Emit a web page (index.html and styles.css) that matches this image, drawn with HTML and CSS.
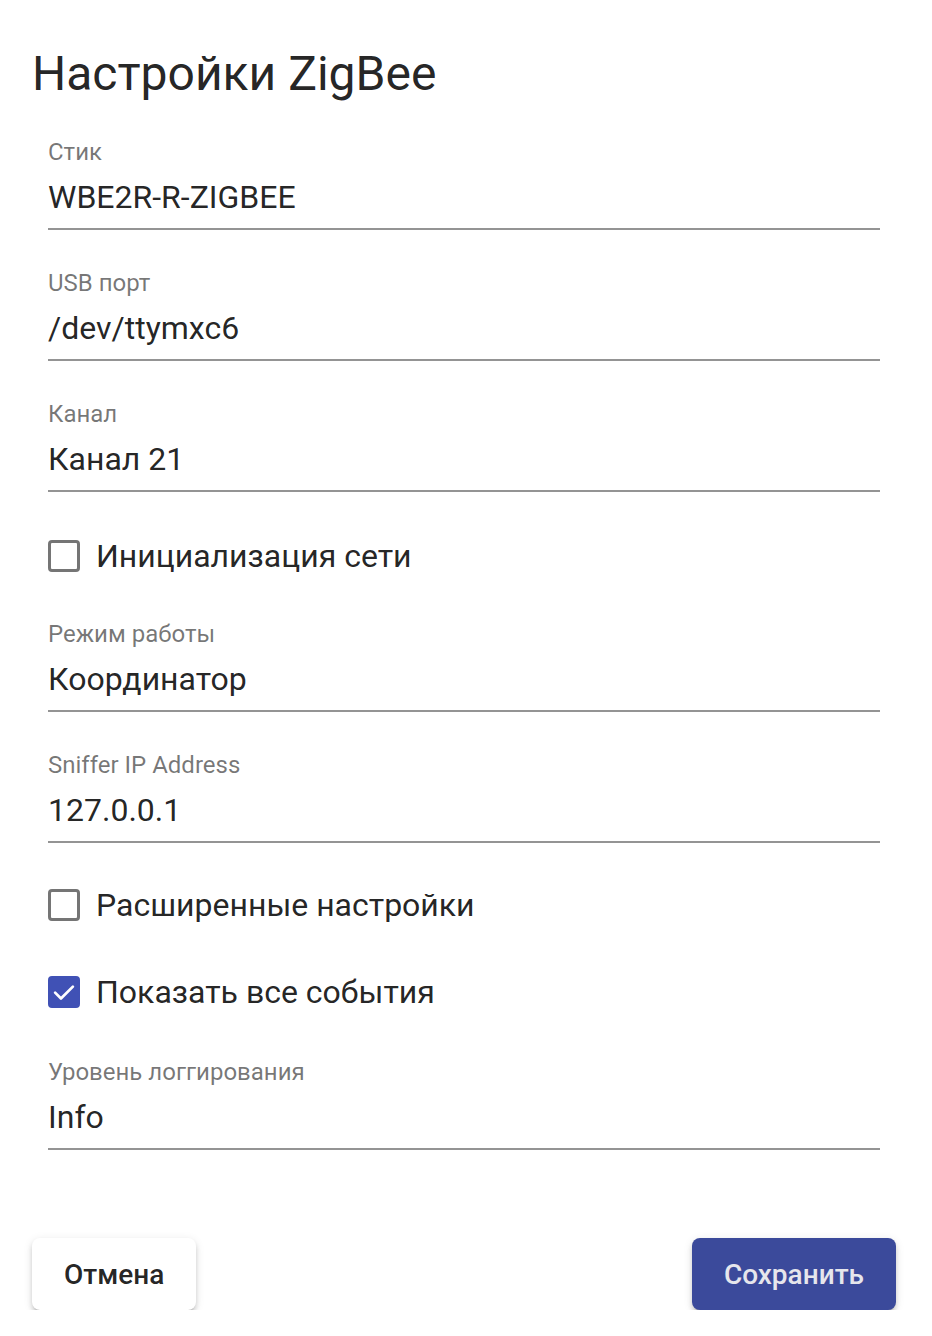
FILE: index.html
```html
<!DOCTYPE html>
<html lang="ru">
    <head>
        <meta charset="UTF-8" />
        <meta name="viewport" content="width=device-width, initial-scale=1.0" />
        <link rel="stylesheet" href="styles.css">
        <title>Настройки ZigBee</title>
    </head>
    <body>
        <div class="dialog">
            <h2 class="dialog-title">Настройки ZigBee</h2>
            <form class="dialog-content">
                <div class="field">
                    <label class="field-label">Стик</label>
                    <div class="field-value">WBE2R-R-ZIGBEE</div>
                </div>
                <div class="field">
                    <label class="field-label">USB порт</label>
                    <div class="field-value">/dev/ttymxc6</div>
                </div>
                <div class="field">
                    <label class="field-label">Канал</label>
                    <div class="field-value">Канал 21</div>
                </div>
                <label class="check">
                    <span class="check-box"></span>
                    <span class="check-text">Инициализация сети</span>
                </label>
                <div class="field">
                    <label class="field-label">Режим работы</label>
                    <div class="field-value">Координатор</div>
                </div>
                <div class="field">
                    <label class="field-label">Sniffer IP Address</label>
                    <div class="field-value">127.0.0.1</div>
                </div>
                <label class="check check-tight">
                    <span class="check-box"></span>
                    <span class="check-text">Расширенные настройки</span>
                </label>
                <label class="check">
                    <span class="check-box checked">
                        <svg viewBox="0 0 24 24" width="30" height="30">
                            <path d="M3.8 12.6l5.4 5.4L20.2 7" fill="none" stroke="#fff" stroke-width="2.5" stroke-linecap="round" stroke-linejoin="round" />
                        </svg>
                    </span>
                    <span class="check-text">Показать все события</span>
                </label>
                <div class="field">
                    <label class="field-label">Уровень логгирования</label>
                    <div class="field-value">Info</div>
                </div>
            </form>
            <div class="dialog-actions">
                <button type="button" class="btn btn-cancel">Отмена</button>
                <button type="submit" class="btn btn-save">Сохранить</button>
            </div>
        </div>
    </body>
</html>
```

FILE: styles.css
```css
* {
    margin: 0;
    padding: 0;
    box-sizing: border-box;
    font-family: Roboto, "Liberation Sans", sans-serif;
}

body {
    background-color: #fff;
}

.dialog {
    width: 932px;
    padding-top: 42px;
}

.dialog-title {
    padding: 0 32px;
    font-size: 48px;
    line-height: 64px;
    font-weight: 400;
    color: rgba(0, 0, 0, 0.87);
}

.dialog-content {
    display: flex;
    flex-direction: column;
    gap: 41px;
    padding: 34px 52px 0 48px;
}

.field {
    display: flex;
    flex-direction: column;
}

.check + .field {
    margin-top: 2px;
}

.check + .check + .field {
    margin-top: 4px;
}

.field-label {
    font-size: 24px;
    line-height: 24px;
    color: rgba(0, 0, 0, 0.54);
}

.field-value {
    margin-top: 14px;
    padding-bottom: 12px;
    font-size: 32px;
    line-height: 38px;
    color: rgba(0, 0, 0, 0.87);
    border-bottom: 2px solid rgba(0, 0, 0, 0.42);
}

.check {
    display: flex;
    align-items: center;
    gap: 16px;
    height: 46px;
}

.check-tight {
    margin-top: -2px;
}

.check-box {
    display: flex;
    align-items: center;
    justify-content: center;
    width: 32px;
    height: 32px;
    border: 3px solid #757575;
    border-radius: 4px;
}

.check-box.checked {
    background-color: #4051b5;
    border-color: #4051b5;
}

.check-text {
    font-size: 32px;
    line-height: 38px;
    color: rgba(0, 0, 0, 0.87);
}

.dialog-actions {
    display: flex;
    justify-content: space-between;
    padding: 0 36px 0 32px;
    margin-top: 88px;
}

.btn {
    height: 72px;
    padding: 0 32px;
    border: none;
    border-radius: 8px;
    font-size: 28px;
    font-weight: 500;
    cursor: pointer;
    box-shadow: 0 3px 2px -2px rgba(0, 0, 0, 0.2), 0 4px 5px 0 rgba(0, 0, 0, 0.14), 0 2px 10px 0 rgba(0, 0, 0, 0.1);
}

.btn-cancel {
    background-color: #fff;
    color: rgba(0, 0, 0, 0.87);
}

.btn-save {
    background-color: #3b4a9b;
    color: #e6e6ec;
}
```
